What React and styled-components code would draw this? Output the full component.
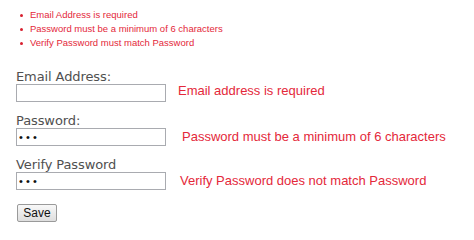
import React from "react";
import styled, { createGlobalStyle } from "styled-components";

const Global = createGlobalStyle`
  html, body { margin: 0; padding: 0; background: #fff; }
  body { width: 474px; height: 240px; overflow: hidden; }
`;

const Page = styled.form`
  padding: 8px 16px 0 16px;
  display: flex;
  flex-direction: column;
`;

const Summary = styled.ul`
  list-style: none;
  margin: 0 0 20px 0;
  padding: 0 0 0 4px;
  display: flex;
  flex-direction: column;
`;

const SummaryItem = styled.li`
  display: flex;
  align-items: center;
  gap: 7px;
  height: 14px;
  font: 9.5px/14px "Liberation Sans", Arial, sans-serif;
  color: #e4283a;
`;

const Bullet = styled.span`
  width: 3px;
  height: 3px;
  border-radius: 50%;
  background: #d8202f;
  flex: none;
`;

const Fields = styled.div`
  display: flex;
  flex-direction: column;
  gap: 12px;
`;

const Field = styled.div`
  display: flex;
  flex-direction: column;
`;

const Label = styled.label`
  font: 13px/14px "DejaVu Sans", Verdana, sans-serif;
  color: #505050;
  letter-spacing: -0.1px;
`;

const Row = styled.div`
  display: flex;
  align-items: flex-start;
`;

const Input = styled.input`
  box-sizing: border-box;
  width: 150px;
  height: 18px;
  margin: 0;
  padding: 0 2px;
  border: 1px solid #a9abb0;
  border-radius: 0;
  outline: none;
  background: #fff;
  font: 11px "Liberation Sans", Arial, sans-serif;
  letter-spacing: 3.2px;
  color: #111;
`;

const ErrorText = styled.span`
  margin-left: ${(p) => p.$offset}px;
  margin-top: ${(p) => p.$shift}px;
  font: 13px/18px "Liberation Sans", Arial, sans-serif;
  color: #e4283a;
  white-space: nowrap;
`;

const Actions = styled.div`
  margin-top: 14px;
  padding-left: 1px;
  display: flex;
`;

const Button = styled.button`
  box-sizing: border-box;
  width: 40px;
  height: 18px;
  padding: 0;
  border: 1px solid #9a9a9a;
  border-radius: 2px;
  background: linear-gradient(#f8f8f8, #dedede);
  font: 12px "Liberation Sans", Arial, sans-serif;
  color: #111;
`;

const summary = [
  "Email Address is required",
  "Password must be a minimum of 6 characters",
  "Verify Password must match Password",
];

const fields = [
  { label: "Email Address:", type: "text", value: "", error: "Email address is required", offset: 12, shift: -2 },
  { label: "Password:", type: "password", value: "abc", error: "Password must be a minimum of 6 characters", offset: 16, shift: 0 },
  { label: "Verify Password", type: "password", value: "abc", error: "Verify Password does not match Password", offset: 14, shift: 0 },
];

export default function App() {
  return (
    <>
      <Global />
      <Page onSubmit={(e) => e.preventDefault()}>
        <Summary>
          {summary.map((s) => (
            <SummaryItem key={s}>
              <Bullet />
              {s}
            </SummaryItem>
          ))}
        </Summary>
        <Fields>
          {fields.map((f) => (
            <Field key={f.label}>
              <Label>{f.label}</Label>
              <Row>
                <Input type={f.type} defaultValue={f.value} readOnly />
                <ErrorText $offset={f.offset} $shift={f.shift}>{f.error}</ErrorText>
              </Row>
            </Field>
          ))}
        </Fields>
        <Actions>
          <Button type="submit">Save</Button>
        </Actions>
      </Page>
    </>
  );
}
